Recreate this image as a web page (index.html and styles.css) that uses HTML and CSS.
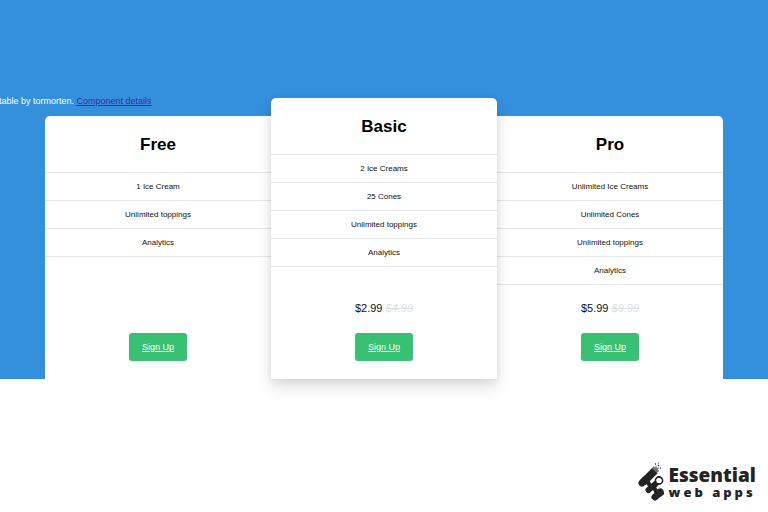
FILE: index.html
```html
<!DOCTYPE html>
<html lang="en">
<head>
  <meta charset="utf-8">
  <meta name="viewport" content="width=device-width, initial-scale=1">
  <title>Pricing table</title>
  <link rel="stylesheet" href="styles.css">
</head>
<body>
  <main class="hero">
    <p class="credit">table by tormorten. <a href="#details">Component details</a></p>
    <div class="plans">
      <section class="plan plan-first">
        <h2>Free</h2>
        <ul>
          <li>1 Ice Cream</li>
          <li>Unlimited toppings</li>
          <li>Analytics</li>
        </ul>
        <div class="plan-footer">
          <a class="signup" href="#free">Sign Up</a>
        </div>
      </section>
      <section class="plan plan-featured">
        <h2>Basic</h2>
        <ul>
          <li>2 Ice Creams</li>
          <li>25 Cones</li>
          <li>Unlimited toppings</li>
          <li>Analytics</li>
        </ul>
        <div class="plan-footer">
          <p class="price">$2.99 <s>$4.99</s></p>
          <a class="signup" href="#basic">Sign Up</a>
        </div>
      </section>
      <section class="plan plan-last">
        <h2>Pro</h2>
        <ul>
          <li>Unlimited Ice Creams</li>
          <li>Unlimited Cones</li>
          <li>Unlimited toppings</li>
          <li>Analytics</li>
        </ul>
        <div class="plan-footer">
          <p class="price">$5.99 <s>$9.99</s></p>
          <a class="signup" href="#pro">Sign Up</a>
        </div>
      </section>
    </div>
  </main>
  <footer class="site-footer">
    <svg class="brand-mark" viewBox="0 0 28 42" aria-hidden="true">
      <g fill="none" stroke="#242424" stroke-linecap="round">
        <path d="M4 22 7 19" stroke-width="7"/>
        <path d="M5 21.500 17 9.500" stroke-width="7.500" stroke-linecap="butt"/>
        <path d="M10.500 29 17.500 23" stroke-width="6"/>
        <path d="M17 36 21.500 32" stroke-width="7"/>
        <path d="M21 32 22 31.500" stroke-width="8"/>
        <path d="M9 19 13 27M16 26 19 33" stroke-width="4"/>
        <circle cx="21" cy="19.500" r="3.500" stroke-width="1.800"/>
      </g>
      <circle cx="21" cy="19.500" r="2.600" fill="#fff"/>
      <g fill="#242424">
        <path d="m14 7 2-2 1 2 1-3 1 3 2-1-1 3 1 1-2 2z" fill="#777"/>
        <circle cx="17.500" cy="3" r=".7"/>
        <circle cx="20.500" cy="2" r=".6"/>
        <circle cx="20.500" cy="4.500" r=".8"/>
        <circle cx="22.500" cy="7" r=".7"/>
      </g>
    </svg>
    <div class="brand-name">
      <span class="brand-top">Essential</span>
      <span class="brand-bottom">web apps</span>
    </div>
  </footer>
</body>
</html>
```
FILE: styles.css
```css
* {
  box-sizing: border-box;
}

body {
  display: flex;
  flex-direction: column;
  min-height: 100vh;
  margin: 0;
  background: #fff;
  color: #111;
  font-family: "Liberation Sans", Arial, sans-serif;
  overflow-x: hidden;
}

h2,
p,
ul {
  margin: 0;
  padding: 0;
}

.hero {
  padding: 95px 45px 0;
  background: #3490dc;
}

.credit {
  margin: 0 -46px 9px;
  color: #fff;
  font-size: 9px;
  line-height: 12px;
}

.credit a {
  color: #4b1fa8;
}

.plans {
  display: grid;
  grid-template-columns: repeat(3, 1fr);
}

.plan {
  display: flex;
  flex-direction: column;
  background: #fff;
  text-align: center;
}

.plan-first {
  border-top-left-radius: 5px;
}

.plan-last {
  border-top-right-radius: 5px;
}

.plan-featured {
  z-index: 1;
  margin-top: -18px;
  border-radius: 5px 5px 0 0;
  box-shadow: 0 8px 16px rgba(0, 0, 0, 0.12), 0 2px 8px rgba(0, 0, 0, 0.08);
}

.plan h2 {
  padding-top: 2px;
  border-bottom: 1px solid #e4e8eb;
  color: #000;
  font-size: 17px;
  line-height: 54px;
}

.plan ul {
  list-style: none;
}

.plan li {
  border-bottom: 1px solid #e4e8eb;
  font-size: 8px;
  line-height: 27px;
}

.plan-footer {
  display: flex;
  flex-direction: column;
  align-items: center;
  gap: 18px;
  margin-top: auto;
  padding: 16px 0 18px;
}

.price {
  font-size: 11px;
  line-height: 14px;
}

.price s {
  color: #dae1e7;
  font-style: italic;
}

.signup {
  padding: 0 13px;
  border-radius: 3px;
  background: #38c172;
  color: #fff;
  font-size: 9px;
  line-height: 28px;
}

.site-footer {
  display: flex;
  align-items: center;
  justify-content: flex-end;
  gap: 3px;
  margin-top: auto;
  padding: 0 12px 9px 0;
  color: #242424;
}

.brand-mark {
  width: 28px;
  height: 42px;
}

.brand-name {
  display: flex;
  flex-direction: column;
  font-family: "Open Sans", "Noto Sans", sans-serif;
  font-weight: 800;
}

.brand-top {
  font-size: 19px;
  line-height: 20px;
}

.brand-bottom {
  font-size: 13px;
  letter-spacing: 3px;
  line-height: 15px;
}
```
